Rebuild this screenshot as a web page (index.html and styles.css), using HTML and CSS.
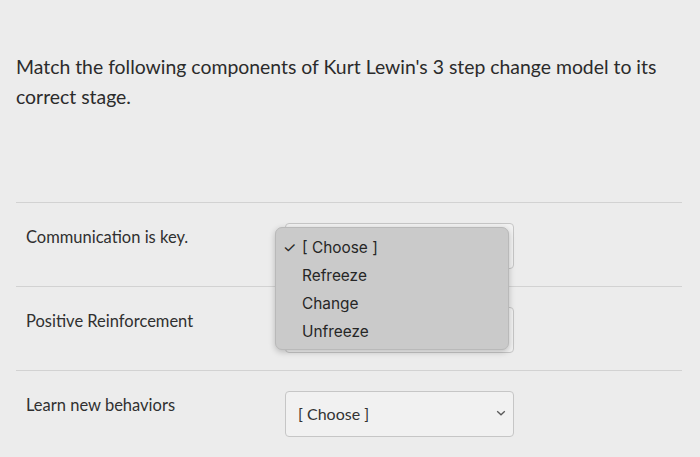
FILE: index.html
```html
<!DOCTYPE html>
<html lang="en">
<head>
<meta charset="utf-8">
<title>Match question</title>
<link rel="stylesheet" href="styles.css">
</head>
<body>
<div class="page">
  <p class="question">Match the following components of Kurt Lewin's 3 step change model to its correct stage.</p>
  <div class="matches">
    <div class="row">
      <div class="label">Communication is key.</div>
      <div class="select-wrap">
        <div class="select"><span class="value covered">[ Choose ]</span><svg class="chev" viewBox="0 0 10 6" width="10" height="6"><path d="M1.2 1.2l3.8 3.6 3.8-3.6" fill="none" stroke="#5a5a5a" stroke-width="1.3"/></svg></div>
        <div class="menu">
          <div class="item selected"><span class="check">✓</span>[ Choose ]</div>
          <div class="item">Refreeze</div>
          <div class="item">Change</div>
          <div class="item">Unfreeze</div>
        </div>
      </div>
    </div>
    <div class="row">
      <div class="label">Positive Reinforcement</div>
      <div class="select-wrap">
        <div class="select"><span class="value covered">[ Choose ]</span><svg class="chev" viewBox="0 0 10 6" width="10" height="6"><path d="M1.2 1.2l3.8 3.6 3.8-3.6" fill="none" stroke="#5a5a5a" stroke-width="1.3"/></svg></div>
      </div>
    </div>
    <div class="row">
      <div class="label">Learn new behaviors</div>
      <div class="select-wrap">
        <div class="select"><span class="value">[ Choose ]</span><svg class="chev" viewBox="0 0 10 6" width="10" height="6"><path d="M1.2 1.2l3.8 3.6 3.8-3.6" fill="none" stroke="#5a5a5a" stroke-width="1.3"/></svg></div>
      </div>
    </div>
  </div>
</div>
</body>
</html>
```
FILE: styles.css
```css
html, body {
  margin: 0;
  padding: 0;
  background: #ececec;
}
.page {
  width: 700px;
  height: 457px;
  overflow: hidden;
  padding: 0 18px 0 16px;
  box-sizing: border-box;
  font-family: Lato, "Liberation Sans", sans-serif;
  color: #2b2b2b;
}
.question {
  margin: 52px 0 0 0;
  font-size: 19.4px;
  line-height: 30px;
  width: 666px;
}
.matches {
  margin-top: 90px;
}
.row {
  display: flex;
  align-items: flex-start;
  border-top: 1px solid #d2d2d2;
  padding: 20px 0 17px 0;
}
.label {
  width: 259px;
  padding-left: 10px;
  font-size: 16.5px;
  line-height: 28px;
  color: #303030;
}
.select-wrap {
  position: relative;
}
.select {
  width: 229px;
  height: 46px;
  box-sizing: border-box;
  border: 1px solid #c6c6c6;
  border-radius: 4px;
  background: #f1f1f1;
  display: flex;
  align-items: center;
  justify-content: space-between;
  padding: 0 7px 2px 12px;
  font-size: 16px;
  color: #333;
}
.covered {
  visibility: hidden;
}
.chev {
  display: block;
}
.menu {
  position: absolute;
  z-index: 10;
  left: -10px;
  top: 4px;
  width: 234px;
  height: 123px;
  box-sizing: border-box;
  padding-top: 6px;
  background: #cacaca;
  border: 1px solid #b9b9b9;
  border-radius: 7px;
  box-shadow: 0 2px 6px rgba(0, 0, 0, 0.22);
  font-family: Inter, "Noto Sans", sans-serif;
  font-size: 15.4px;
  color: #262626;
}
.item {
  height: 28px;
  line-height: 28px;
  padding-left: 26px;
  position: relative;
}
.check {
  position: absolute;
  left: 7px;
  top: 0;
  font-size: 15px;
}
```
